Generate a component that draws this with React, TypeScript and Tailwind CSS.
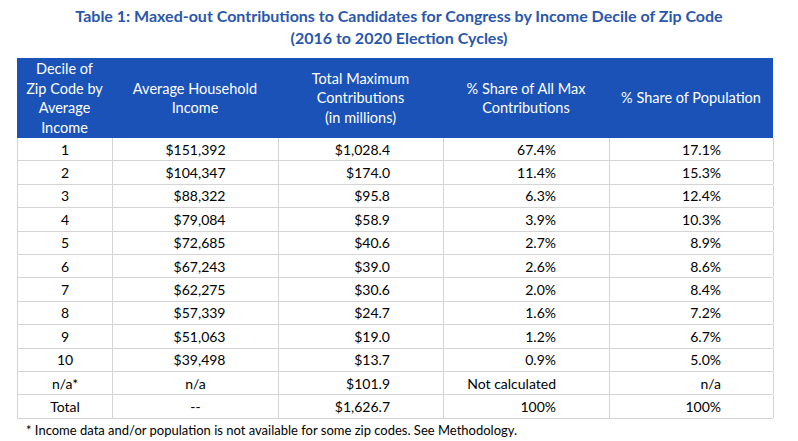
const HEADERS = [
  ["Decile of", "Zip Code by", "Average", "Income"],
  ["Average Household", "Income"],
  ["Total Maximum", "Contributions", "(in millions)"],
  ["% Share of All Max", "Contributions"],
  ["% Share of Population"],
];

// decile, income, total, share, population
const ROWS: string[][] = [
  ["1", "$151,392", "$1,028.4", "67.4%", "17.1%"],
  ["2", "$104,347", "$174.0", "11.4%", "15.3%"],
  ["3", "$88,322", "$95.8", "6.3%", "12.4%"],
  ["4", "$79,084", "$58.9", "3.9%", "10.3%"],
  ["5", "$72,685", "$40.6", "2.7%", "8.9%"],
  ["6", "$67,243", "$39.0", "2.6%", "8.6%"],
  ["7", "$62,275", "$30.6", "2.0%", "8.4%"],
  ["8", "$57,339", "$24.7", "1.6%", "7.2%"],
  ["9", "$51,063", "$19.0", "1.2%", "6.7%"],
  ["10", "$39,498", "$13.7", "0.9%", "5.0%"],
  ["n/a*", "n/a", "$101.9", "Not calculated", "n/a"],
  ["Total", "--", "$1,626.7", "100%", "100%"],
];

const COLS = "grid grid-cols-[95px_166px_165px_166px_164px]";

export default function App() {
  return (
    <div
      className="w-[798px] h-[441px] bg-white text-black overflow-hidden"
      style={{ fontFamily: "Lato, 'Open Sans', sans-serif" }}
    >
      {/* title */}
      <div className="pt-[5px] text-center text-[16px] leading-[22px] font-bold text-[#2a57ab]">
        <div>Table 1: Maxed-out Contributions to Candidates for Congress by Income Decile of Zip Code</div>
        <div>(2016 to 2020 Election Cycles)</div>
      </div>

      <div className="ml-[17px] mt-[9px] w-[756px]">
        {/* header */}
        <div className={`${COLS} h-[80px] bg-[#1a52b8] text-white text-[14.5px] leading-[19.5px]`}>
          {HEADERS.map((lines, i) => (
            <div key={i} className="flex flex-col items-center justify-center text-center">
              {lines.map((l) => (
                <div key={l}>{l}</div>
              ))}
            </div>
          ))}
        </div>

        {/* body */}
        <div className="border-l border-[#d4d4d4] text-[14px]">
          {ROWS.map((r) => (
            <div key={r[0]} className={`${COLS} h-[23.4px] border-b border-[#d4d4d4]`}>
              <div className="flex items-center justify-center border-r border-[#d4d4d4]">{r[0]}</div>
              <div className="flex items-center justify-center border-r border-[#d4d4d4]">
                {r[1].startsWith("$") ? (
                  <span className="w-[60px] text-right">{r[1]}</span>
                ) : (
                  <span>{r[1]}</span>
                )}
              </div>
              <div className="flex items-center justify-end pr-[53px] border-r border-[#d4d4d4]">{r[2]}</div>
              <div className="flex items-center justify-end pr-[53px] border-r border-[#d4d4d4]">{r[3]}</div>
              <div className="flex items-center justify-end pr-[52px] border-r border-[#d4d4d4]">{r[4]}</div>
            </div>
          ))}
        </div>

        <div className="mt-[2px] ml-[9px] text-[13px] leading-[18px] text-black">
          * Income data and/or population is not available for some zip codes. See Methodology.
        </div>
      </div>
    </div>
  );
}
